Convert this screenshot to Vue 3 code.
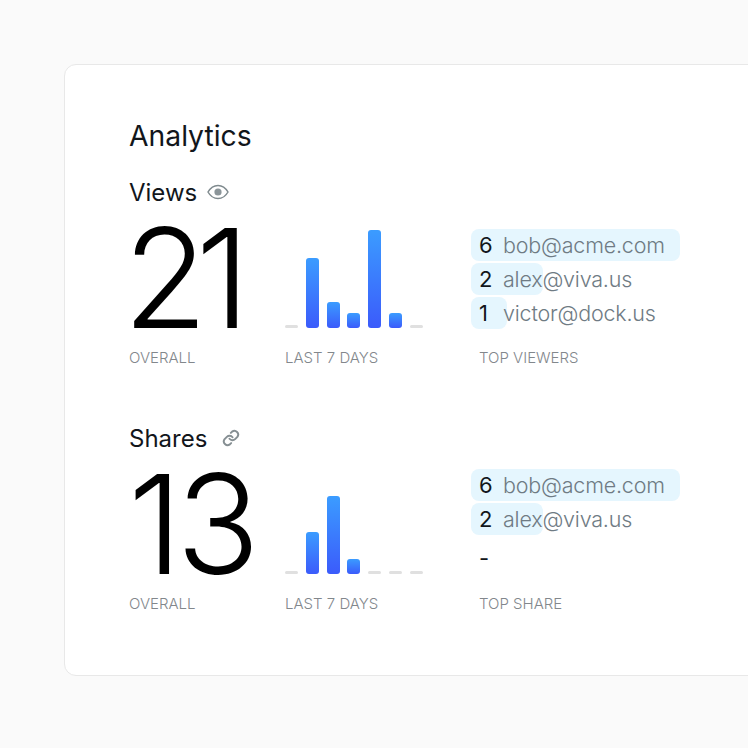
<script setup>
// bars: 0 draws the grey dash
const sections = [
  {
    title: 'Views',
    icon: 'eye',
    total: 21,
    days: [0, 70, 26, 15, 98, 15, 0],
    listLabel: 'TOP VIEWERS',
    people: [
      { count: 6, email: 'bob@acme.com', width: 209 },
      { count: 2, email: 'alex@viva.us', width: 72 },
      { count: 1, email: 'victor@dock.us', width: 36 },
    ],
  },
  {
    title: 'Shares',
    icon: 'link',
    total: 13,
    days: [0, 42, 78, 15, 0, 0, 0],
    listLabel: 'TOP SHARE',
    people: [
      { count: 6, email: 'bob@acme.com', width: 209 },
      { count: 2, email: 'alex@viva.us', width: 72 },
    ],
  },
]
</script>

<template>
  <div class="page">
    <main class="card">
      <h1 class="title">Analytics</h1>

      <section v-for="s in sections" :key="s.title" class="section">
        <h2 class="heading">
          {{ s.title }}
          <svg v-if="s.icon === 'eye'" class="eye" width="22" height="16" viewBox="0 0 22 16" fill="none">
            <path d="M1 8c2.400-4.200 5.800-6.600 10-6.600S18.600 3.800 21 8c-2.400 4.200-5.800 6.600-10 6.600S3.400 12.200 1 8Z" stroke="#7f8a8e" stroke-width="1.500" />
            <circle cx="11" cy="8" r="3.600" fill="#8b9599" />
          </svg>
          <svg v-else class="link" width="18" height="18" viewBox="0 0 24 24" fill="none" stroke="#868f93" stroke-width="2.600" stroke-linecap="round" stroke-linejoin="round">
            <path d="M10 13a5 5 0 0 0 7.500.5l3-3a5 5 0 0 0-7-7l-1.700 1.700" />
            <path d="M14 11a5 5 0 0 0-7.500-.5l-3 3a5 5 0 0 0 7 7l1.700-1.700" />
          </svg>
        </h2>

        <div class="stats">
          <div class="col col-total">
            <div class="total" :class="'total-' + s.icon">{{ s.total }}</div>
            <div class="label">OVERALL</div>
          </div>

          <div class="col col-chart">
            <div class="chart">
              <div
                v-for="(d, i) in s.days"
                :key="i"
                :class="d ? 'bar' : 'dash'"
                :style="d ? { height: d + 'px' } : null"
              ></div>
            </div>
            <div class="label">LAST 7 DAYS</div>
          </div>

          <div class="col col-list">
            <ul class="people">
              <li v-for="p in s.people" :key="p.email" class="person">
                <span class="fill" :style="{ width: p.width + 'px' }"></span>
                <span class="count">{{ p.count }}</span>
                <span class="email">{{ p.email }}</span>
              </li>
              <li v-if="s.people.length < 3" class="none">-</li>
            </ul>
            <div class="label label-list">{{ s.listLabel }}</div>
          </div>
        </div>
      </section>
    </main>
  </div>
</template>

<style>
html, body {
  margin: 0;
  overflow: hidden;
  background: #fafafa;
}
</style>

<style scoped>
.page {
  width: 748px;
  height: 748px;
  overflow: hidden;
  padding: 64px 0 0 64px;
  box-sizing: border-box;
  font-family: Inter, "Liberation Sans", sans-serif;
  color: #12161b;
}

.card {
  width: 760px;
  height: 612px;
  box-sizing: border-box;
  padding: 53px 0 0 64px;
  background: #fff;
  border: 1px solid #e8e8e8;
  border-radius: 12px;
}

.title {
  margin: 0 0 22px;
  font-size: 28.300px;
  line-height: 36px;
  font-weight: 400;
}

.section + .section {
  margin-top: 54px;
}

.heading {
  display: flex;
  align-items: center;
  height: 32px;
  margin: 0 0 8px;
  font-size: 24px;
  font-weight: 400;
}

.eye { margin-left: 10px; }
.link { margin-left: 15px; }

.stats {
  display: flex;
}

.col-total { width: 156px; }
.col-chart { width: 186px; }

.total {
  height: 118px;
  font-size: 138px;
  line-height: 124px;
  font-weight: 300;
  color: #000;
}

.total-eye {
  margin-left: -6px;
  letter-spacing: -12px;
}

.total-link {
  margin-left: -1px;
  letter-spacing: -6px;
}

.chart {
  display: flex;
  align-items: flex-end;
  gap: 7.800px;
  height: 118px;
  box-sizing: border-box;
  padding-bottom: 6px;
}

.bar, .dash {
  width: 13px;
  flex: none;
}

.bar {
  border-radius: 3px;
  background: linear-gradient(#3b9cff, #3b5bfb);
}

.dash {
  height: 3px;
  border-radius: 2px;
  background: #e0e0e0;
}

.label {
  margin-top: 14px;
  font-size: 15px;
  line-height: 20px;
  font-weight: 300;
  color: #82878c;
}

.label-list {
  padding-left: 8px;
  margin-top: 0;
}

.people {
  height: 118px;
  box-sizing: border-box;
  margin: 0 0 14px;
  padding: 13px 0 0;
  list-style: none;
}

.section + .section .people {
  padding-top: 7px;
}

.person {
  position: relative;
  display: flex;
  align-items: center;
  height: 32px;
  margin-bottom: 2px;
  font-size: 22px;
}

.fill {
  position: absolute;
  left: 0;
  top: 0;
  bottom: 0;
  border-radius: 8px;
  background: #e5f6fe;
}

.count {
  position: relative;
  width: 32px;
  padding-left: 8px;
  box-sizing: border-box;
}

.email {
  position: relative;
  font-size: 21.500px;
  letter-spacing: -.2px;
  font-weight: 300;
  color: #6f7b84;
}

.none {
  padding: 5px 0 0 8px;
  font-size: 22px;
  line-height: 32px;
}
</style>
